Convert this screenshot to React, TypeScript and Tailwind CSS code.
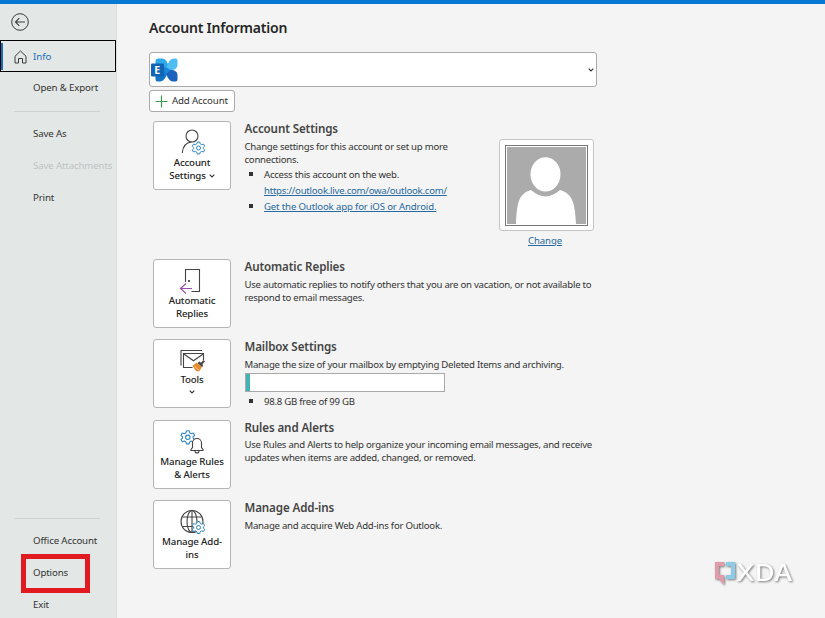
import React from "react";

interface SectionProps {
  title: string;
  label: string[];
  icon: React.ReactNode;
  chevron?: "inline" | "below";
  className: string;
  children: React.ReactNode;
}

function Chevron() {
  return (
    <svg className="inline-block h-[4px] w-[6px]" viewBox="0 0 6 4" fill="none">
      <path d="M.7.7 3 2.9 5.3.7" stroke="#333" strokeWidth="1.1" />
    </svg>
  );
}

function Gear({ x, y, scale = 1 }: { x: number; y: number; scale?: number }) {
  return (
    <g
      transform={`translate(${x} ${y}) scale(${scale})`}
      stroke="#2e86bd"
      strokeWidth="1"
      strokeLinejoin="round"
      fill="#fff"
    >
      <path d="M-1.2-6h2.4l.5 1.9 1.4.8 1.9-.6 1.2 2.1-1.4 1.3v1.2l1.4 1.2L5 4 3.1 3.4l-1.4.8L1.2 6h-2.4l-.5-1.8-1.4-.8L-5 4l-1.2-2.1L-4.8.7V-.5l-1.4-1.3L-5-3.9l1.9.6 1.4-.8z" />
      <circle r="2" />
    </g>
  );
}

function AccountIcon() {
  return (
    <svg className="h-[28px] w-[28px]" viewBox="0 0 28 28" fill="none">
      <g stroke="#444" strokeWidth="1.1">
        <circle cx="14" cy="8" r="6" />
        <path d="M4.300 25C4.800 18 8 14.500 13.500 14" />
      </g>
      <Gear x={20.5} y={20} />
    </svg>
  );
}

function RepliesIcon() {
  return (
    <svg className="h-[28px] w-[28px]" viewBox="0 0 28 28" fill="none">
      <path d="M7.500 16V3.500h14v22h-8" stroke="#444" strokeWidth="1.100" />
      <circle cx="11" cy="15" r="1.100" fill="#333" />
      <path d="M14 22.500H2.500M8 17.500l-5.500 5L8 27.500" stroke="#a04fae" strokeWidth="1.200" />
    </svg>
  );
}

function ToolsIcon() {
  return (
    <svg className="mt-px h-[26px] w-[28px]" viewBox="0 0 28 26" fill="none">
      <g stroke="#444" strokeWidth="1.100">
        <path d="M3 18.500V3.500h21" />
        <path d="M14.500 20.500H5.500v-14h20V13M5.500 6.800l10 7 10-7" />
      </g>
      <path d="M14.500 19l4-3.500 5.500 4.500-3 4.500-3-.500z" fill="#e78a2e" />
      <path d="M17 19.500l3.500 3.500" stroke="#fff" strokeWidth=".6" />
      <path d="M19.500 16l2-1.500 1.500 1.200 2.500-2.700 1.500 1.500-2.500 2.500.5 2-1 1z" fill="#444" />
    </svg>
  );
}

function RulesIcon() {
  return (
    <svg className="h-[28px] w-[28px]" viewBox="0 0 28 28" fill="none">
      <Gear x={9.8} y={10.3} scale={1.1} />
      <g stroke="#444" strokeWidth="1.100" fill="#fff">
        <path d="M17 24a2 2 0 0 0 4 0" />
        <path d="M13 23.500v-1l1.500-2V16a4.500 4.500 0 0 1 9 0v4.500l1.500 2v1z" />
      </g>
    </svg>
  );
}

function AddinsIcon() {
  return (
    <svg className="h-[28px] w-[28px]" viewBox="0 0 28 28" fill="none">
      <g stroke="#444" strokeWidth="1.100">
        <circle cx="14" cy="14.500" r="11" />
        <ellipse cx="14" cy="14.500" rx="5" ry="11" />
        <path d="M14 3.500v22M4.500 10h19M4.500 19.500h19" />
      </g>
      <Gear x={20.5} y={20.5} />
    </svg>
  );
}

function ExchangeIcon() {
  return (
    <svg className="h-[26px] w-[27px]" viewBox="0 0 27 26">
      <path d="M4.500 4.500Q4.500 1.500 7.500 1.500h3c3 0 5 2 6 4.500l2.500 7H4.500z" fill="#2fa9ea" />
      <path d="M16 9c1.500-4.500 3.500-7.500 7-7.500h1.500q2 0 2 2v4c0 3.500-2.500 5.500-6.500 5.500h-5z" fill="#4dbdf2" />
      <path d="M4.500 13h13l-2.500 6.500c-1.500 3-3.500 5-6.500 5h-2q-2 0-2-2z" fill="#1272c4" />
      <path d="M15 13h5c4 0 6.500 2 6.500 5v4.500q0 2-2 2H22c-3 0-5-3-6.500-6.500L13.500 14z" fill="#1b62be" />
      <path d="M12 9l8 4-6 5z" fill="#1b87d8" />
      <rect x="0" y="6.500" width="13" height="13" rx="1" fill="#0f64b4" />
      <text x="3.300" y="16.800" fill="#fff" fontSize="10.500" fontWeight="700" fontFamily="Open Sans, sans-serif">
        E
      </text>
    </svg>
  );
}

function NavItem({ label, disabled }: { label: string; disabled?: boolean }) {
  return (
    <div
      className={`flex h-[32px] shrink-0 items-center pt-px pl-[33px] text-[9.7px] tracking-[-0.015em] ${
        disabled ? "text-[#bfc3c3]" : "text-[#333]"
      }`}
    >
      {label}
    </div>
  );
}

function Section({ title, label, icon, chevron, className, children }: SectionProps) {
  return (
    <section className={`flex gap-[13.5px] pl-[4px] ${className}`}>
      <button className="flex h-[69px] w-[78px] shrink-0 flex-col items-center rounded-[3px] border border-[#b4b4b4] bg-white pt-[6px] text-[9.7px] leading-[13px] font-medium tracking-[-0.015em] text-[#222]">
        {icon}
        {label.map((line, i) => (
          <span key={line} className="flex items-center gap-[3px]">
            {line}
            {chevron === "inline" && i === label.length - 1 && <Chevron />}
          </span>
        ))}
        {chevron === "below" && (
          <span className="flex h-[11px] items-center">
            <Chevron />
          </span>
        )}
      </button>
      <div className="text-[9.6px] leading-[13px] tracking-[-0.0255em] text-[#333]">
        <h2 className="mb-[2.5px] text-[11.6px] leading-[16px] font-semibold tracking-[-0.01em] text-[#444]">
          {title}
        </h2>
        {children}
      </div>
    </section>
  );
}

function Bullet({ children }: { children: React.ReactNode }) {
  return (
    <div className="flex">
      <span className="mt-[4px] mr-[11.5px] ml-[4px] h-[4px] w-[4px] shrink-0 bg-[#333]" />
      <div>{children}</div>
    </div>
  );
}

function Sidebar() {
  return (
    <nav className="relative flex w-[117px] shrink-0 flex-col overflow-hidden border-r border-[#dcdfdf] bg-[#e3e7e6]">
      <div className="flex h-[36px] shrink-0 items-center pl-[11px]">
        <svg className="h-[18px] w-[18px]" viewBox="0 0 18 18" fill="none" stroke="#3c3c3c">
          <circle cx="9" cy="9" r="8.300" />
          <path d="M14 9H4.500M8.300 5.200L4.500 9l3.800 3.800" strokeWidth="1.100" />
        </svg>
      </div>
      <div className="flex h-[32px] shrink-0 items-center border border-l-0 border-black text-[9.7px] text-[#2470b8] outline outline-[0.5px] -outline-offset-1 outline-black">
        <span className="ml-[1px] h-[27px] w-[2px] bg-[#1769b5]" />
        <svg className="mt-px ml-[11px] h-[14px] w-[13px]" viewBox="0 0 13 14" fill="none" stroke="#3c3c3c">
          <path d="M1 6.300 6.500 1 12 6.300V13H8.500V8.500h-4V13H1z" />
        </svg>
        <span className="mt-[2px] ml-[6px]">Info</span>
      </div>
      <NavItem label="Open & Export" />
      <div className="mt-[7px] mr-[16px] mb-[6px] ml-[14px] h-px shrink-0 bg-[#cdd1d1]" />
      <NavItem label="Save As" />
      <NavItem label="Save Attachments" disabled />
      <NavItem label="Print" />
      <div className="mt-[304px] mr-[16px] mb-[6px] ml-[14px] h-px shrink-0 bg-[#cdd1d1]" />
      <NavItem label="Office Account" />
      <NavItem label="Options" />
      <NavItem label="Exit" />
      {/* highlight around Options */}
      <div className="absolute top-[550px] left-[21px] h-[39px] w-[69px] border-[5px] border-[#e21b22]" />
    </nav>
  );
}

function Watermark() {
  return (
    <div className="absolute top-[560px] left-[715px] flex items-start gap-px drop-shadow-[1px_1px_1px_rgba(0,0,0,0.5)]">
      <svg className="h-[27px] w-[20px]" viewBox="0 0 20 27">
        <path d="M0 2h9v4H4v9h5v10L4 19H0z" fill="#df9dab" />
        <path d="M11 2h9v17h-9v-4h5V6h-5z" fill="#8ecbe6" />
      </svg>
      <span className="origin-left scale-x-[1.18] font-['Inter'] text-[23px] leading-[26px] font-medium text-white">
        XDA
      </span>
    </div>
  );
}

const link = "text-[#2669a0] underline underline-offset-[1px]";

function App() {
  return (
    <div className="relative flex h-[618px] w-[825px] flex-col overflow-hidden bg-[#f4f4f4] font-['Noto_Sans','Open_Sans',sans-serif] whitespace-nowrap">
      <div className="h-[4px] shrink-0 bg-[#0678d4]" />
      <div className="flex min-h-0 flex-1">
        <Sidebar />
        <main className="w-[480px] pl-[32px]">
          <h1 className="mt-[14px] h-[34px] text-[14px] leading-[20px] font-semibold tracking-[-0.015em] text-[#262626]">
            Account Information
          </h1>
          <div className="flex h-[35px] w-[448px] items-center justify-between rounded-[3px] border border-[#aaa] bg-white pr-[2px] pl-[1px]">
            <ExchangeIcon />
            <Chevron />
          </div>
          <button className="mt-[3px] flex h-[22px] w-[86px] items-center rounded-[3px] border border-[#aaa] bg-white pl-[5px] text-[9.7px] tracking-[-0.015em] text-[#333]">
            <svg className="mr-[4px] h-[13px] w-[13px]" viewBox="0 0 13 13">
              <path d="M6.500.5v12M.5 6.500h12" stroke="#3a9a52" strokeWidth="1.200" />
            </svg>
            <span className="mt-px">Add Account</span>
          </button>

          <Section
            title="Account Settings"
            label={["Account", "Settings"]}
            chevron="inline"
            icon={<AccountIcon />}
            className="mt-[9px] h-[138px]"
          >
            <div className="flex">
              <div className="w-[254.5px]">
                Change settings for this account or set up more
                <br />
                connections.
                <div className="mt-[2px]">
                  <Bullet>
                    Access this account on the web.
                    <div className="mt-[3px]">
                      <a className={link}>https://outlook.live.com/owa/outlook.com/</a>
                    </div>
                  </Bullet>
                </div>
                <div className="mt-[3px]">
                  <Bullet>
                    <a className={`tracking-[-0.015em] ${link}`}>Get the Outlook app for iOS or Android.</a>
                  </Bullet>
                </div>
              </div>
              <div className="-mt-px flex w-[95px] flex-col items-center">
                <div className="h-[92px] w-[95px] rounded-[3px] border border-[#c4c4c4] bg-white p-[5px]">
                  <svg className="h-[81px] w-[83px] border border-[#777] p-px" viewBox="0 0 79 76" preserveAspectRatio="none">
                    <rect width="79" height="76" fill="#ababab" />
                    <ellipse cx="38.500" cy="27" rx="15" ry="17" fill="#fff" />
                    <path d="M9 76C10 54 12 46 24 42.500Q38.500 55 53 42.500C65 46 68 54 69 76z" fill="#fff" />
                  </svg>
                </div>
                <a className={`mt-[3px] mr-[3px] tracking-[-0.01em] ${link}`}>Change</a>
              </div>
            </div>
          </Section>

          <Section
            title="Automatic Replies"
            label={["Automatic", "Replies"]}
            icon={<RepliesIcon />}
            className="h-[80px]"
          >
            Use automatic replies to notify others that you are on vacation, or not available to
            <br />
            respond to email messages.
          </Section>

          <Section
            title="Mailbox Settings"
            label={["Tools"]}
            chevron="below"
            icon={<ToolsIcon />}
            className="h-[80.5px]"
          >
            Manage the size of your mailbox by emptying Deleted Items and archiving.
            <div className="mt-[2px] mb-[3px] h-[19px] w-[200px] border border-[#aaa] bg-white">
              <div className="h-full w-[4px] bg-[#43b3b5]" />
            </div>
            <Bullet>98.8 GB free of 99 GB</Bullet>
          </Section>

          <Section
            title="Rules and Alerts"
            label={["Manage Rules", "& Alerts"]}
            icon={<RulesIcon />}
            className="h-[80.5px]"
          >
            Use Rules and Alerts to help organize your incoming email messages, and receive
            <br />
            updates when items are added, changed, or removed.
          </Section>

          <Section
            title="Manage Add-ins"
            label={["Manage Add-", "ins"]}
            icon={<AddinsIcon />}
            className="h-[80px]"
          >
            Manage and acquire Web Add-ins for Outlook.
          </Section>
        </main>
      </div>
      <Watermark />
    </div>
  );
}

export default App;
